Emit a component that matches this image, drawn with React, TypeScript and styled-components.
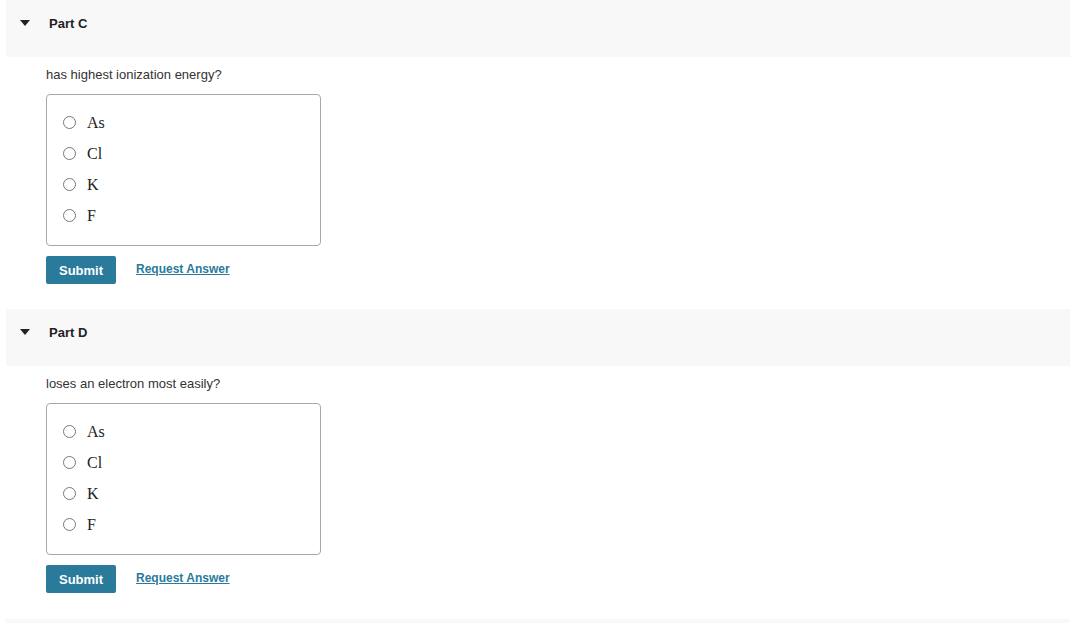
import React from "react";
import styled, { createGlobalStyle } from "styled-components";

const GlobalStyle = createGlobalStyle`
  html, body { margin: 0; padding: 0; background: #fff; }
  body { font-family: "Liberation Sans", Arial, sans-serif; color: #333; }
`;

const Page = styled.div`
  padding-left: 6px;
  display: flex;
  flex-direction: column;
`;

const Section = styled.section`
  display: flex;
  flex-direction: column;
`;

const Header = styled.div`
  height: 57px;
  background: #f8f8f8;
  display: flex;
  align-items: center;
  padding-left: 14px;
  gap: 19px;
  box-sizing: border-box;
  padding-bottom: 11px;
`;

const Caret = styled.span`
  width: 0;
  height: 0;
  border-left: 5px solid transparent;
  border-right: 5px solid transparent;
  border-top: 6px solid #222;
`;

const Title = styled.h2`
  margin: 0;
  font-size: 13px;
  font-weight: bold;
  color: #222;
`;

const Body = styled.div`
  padding: 9px 0 25px 40px;
  display: flex;
  flex-direction: column;
  align-items: flex-start;
`;

const Question = styled.p`
  margin: 0;
  font-size: 13px;
  line-height: 18px;
  color: #333;
`;

const Choices = styled.div`
  margin-top: 10px;
  width: 275px;
  box-sizing: border-box;
  border: 1px solid #a8a8a8;
  border-radius: 4px;
  padding: 12px 0 14px 16px;
  display: flex;
  flex-direction: column;
`;

const Choice = styled.label`
  height: 31px;
  display: flex;
  align-items: center;
  gap: 11px;
  font-family: "Liberation Serif", "Times New Roman", serif;
  font-size: 16px;
  color: #222;
`;

const Radio = styled.span`
  width: 11px;
  height: 11px;
  border: 1px solid #777;
  border-radius: 50%;
  background: #fff;
  flex: none;
`;

const Actions = styled.div`
  margin-top: 10px;
  display: flex;
  align-items: center;
  gap: 20px;
`;

const SubmitButton = styled.button`
  width: 70px;
  height: 28px;
  border: none;
  border-radius: 2px;
  background: #2a7a9b;
  color: #fff;
  font-family: "Liberation Sans", Arial, sans-serif;
  font-size: 13px;
  font-weight: bold;
  padding: 0;
  padding-top: 1px;
`;

const RequestLink = styled.a`
  font-size: 12px;
  font-weight: bold;
  color: #2a7a9b;
  text-decoration: underline;
  margin-top: -2px;
`;

const BottomBand = styled.div`
  height: 10px;
  margin-top: 1px;
  background: #f8f8f8;
`;

const options = ["As", "Cl", "K", "F"];

const parts = [
  { name: "Part C", question: "has highest ionization energy?" },
  { name: "Part D", question: "loses an electron most easily?" },
];

export default function App() {
  return (
    <>
      <GlobalStyle />
      <Page>
        {parts.map((p) => (
          <Section key={p.name}>
            <Header>
              <Caret />
              <Title>{p.name}</Title>
            </Header>
            <Body>
              <Question>{p.question}</Question>
              <Choices>
                {options.map((o) => (
                  <Choice key={o}>
                    <Radio />
                    {o}
                  </Choice>
                ))}
              </Choices>
              <Actions>
                <SubmitButton>Submit</SubmitButton>
                <RequestLink href="#">Request Answer</RequestLink>
              </Actions>
            </Body>
          </Section>
        ))}
        <BottomBand />
      </Page>
    </>
  );
}
